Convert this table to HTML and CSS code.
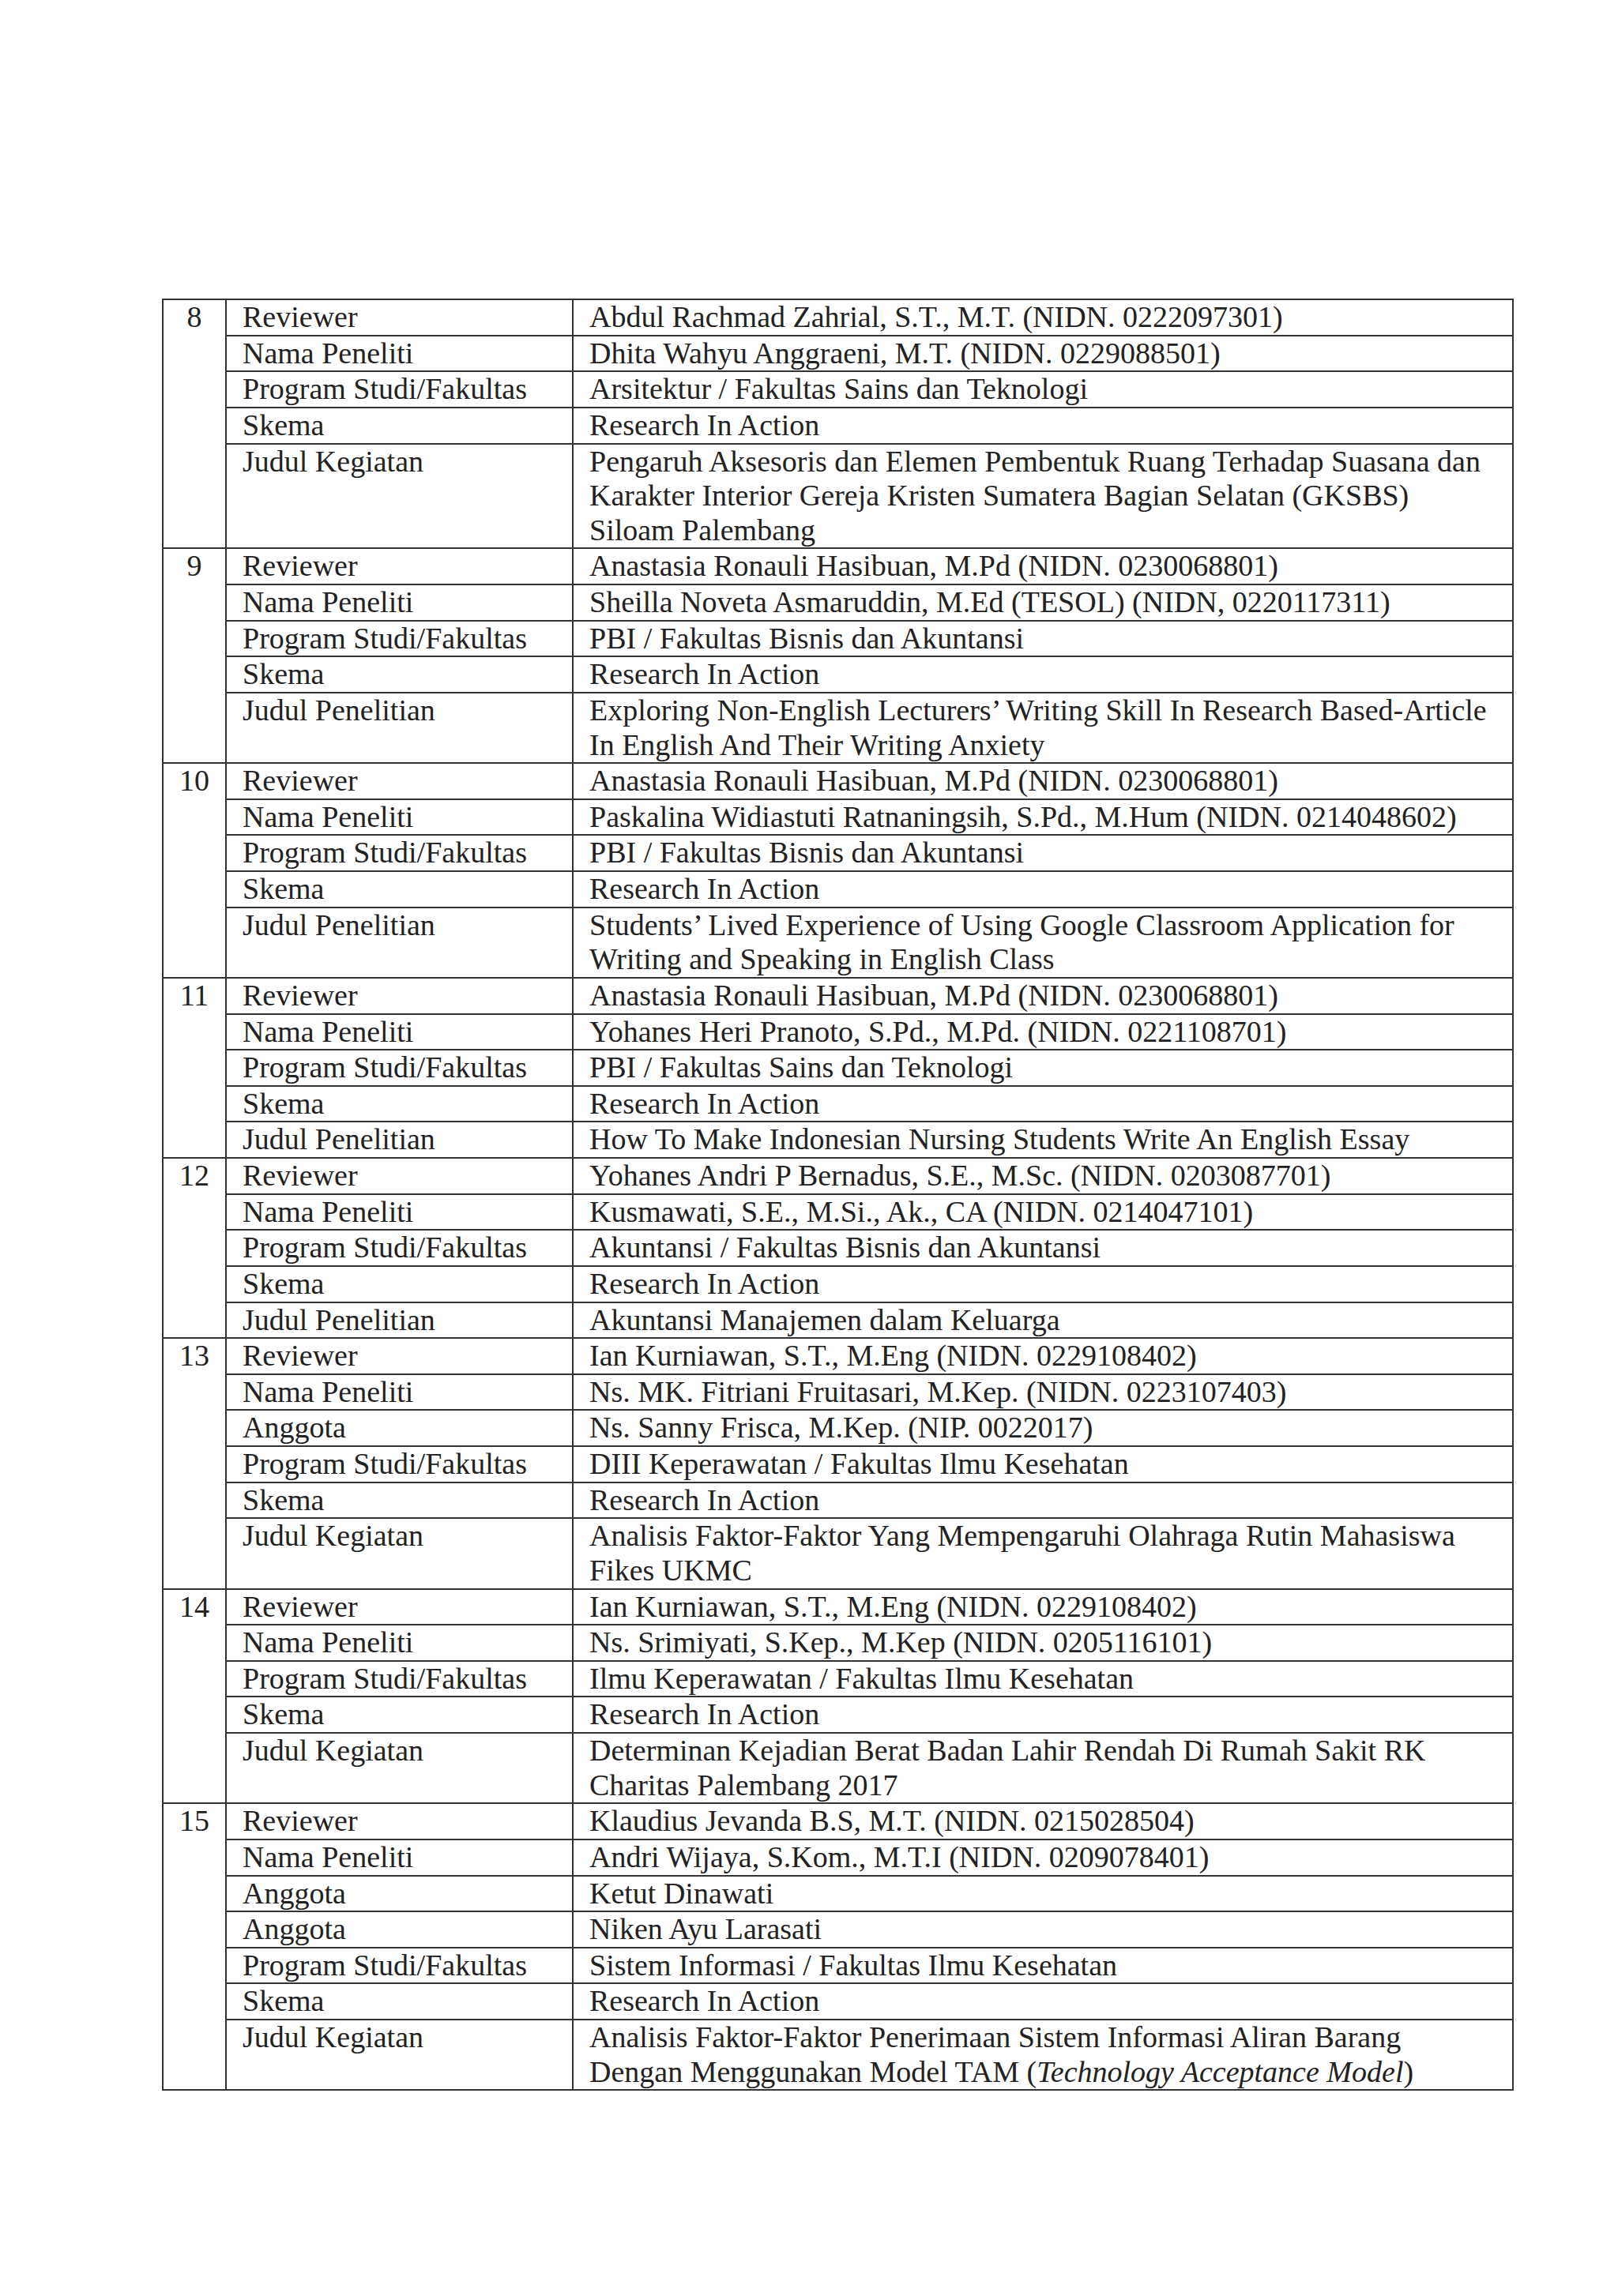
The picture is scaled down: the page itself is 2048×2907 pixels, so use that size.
FILE: index.html
```html
<!DOCTYPE html>
<html lang="id">
<head>
<meta charset="utf-8">
<title>Daftar Reviewer Penelitian</title>
<link rel="stylesheet" href="styles.css">
</head>
<body>
<div class="page">
<table class="tbl">
<colgroup><col class="c1"><col class="c2"><col class="c3"></colgroup>
<tbody>
<tr><td class="no" rowspan="5">8</td><td class="lbl">Reviewer</td><td class="val">Abdul Rachmad Zahrial, S.T., M.T. (NIDN. 0222097301)</td></tr>
<tr><td class="lbl">Nama Peneliti</td><td class="val">Dhita Wahyu Anggraeni, M.T. (NIDN. 0229088501)</td></tr>
<tr><td class="lbl">Program Studi/Fakultas</td><td class="val">Arsitektur / Fakultas Sains dan Teknologi</td></tr>
<tr><td class="lbl">Skema</td><td class="val">Research In Action</td></tr>
<tr><td class="lbl">Judul Kegiatan</td><td class="val">Pengaruh Aksesoris dan Elemen Pembentuk Ruang Terhadap Suasana dan<br>Karakter Interior Gereja Kristen Sumatera Bagian Selatan (GKSBS)<br>Siloam Palembang</td></tr>

<tr><td class="no" rowspan="5">9</td><td class="lbl">Reviewer</td><td class="val">Anastasia Ronauli Hasibuan, M.Pd (NIDN. 0230068801)</td></tr>
<tr><td class="lbl">Nama Peneliti</td><td class="val">Sheilla Noveta Asmaruddin, M.Ed (TESOL) (NIDN, 0220117311)</td></tr>
<tr><td class="lbl">Program Studi/Fakultas</td><td class="val">PBI / Fakultas Bisnis dan Akuntansi</td></tr>
<tr><td class="lbl">Skema</td><td class="val">Research In Action</td></tr>
<tr><td class="lbl">Judul Penelitian</td><td class="val">Exploring Non-English Lecturers’ Writing Skill In Research Based-Article<br>In English And Their Writing Anxiety</td></tr>

<tr><td class="no" rowspan="5">10</td><td class="lbl">Reviewer</td><td class="val">Anastasia Ronauli Hasibuan, M.Pd (NIDN. 0230068801)</td></tr>
<tr><td class="lbl">Nama Peneliti</td><td class="val">Paskalina Widiastuti Ratnaningsih, S.Pd., M.Hum (NIDN. 0214048602)</td></tr>
<tr><td class="lbl">Program Studi/Fakultas</td><td class="val">PBI / Fakultas Bisnis dan Akuntansi</td></tr>
<tr><td class="lbl">Skema</td><td class="val">Research In Action</td></tr>
<tr><td class="lbl">Judul Penelitian</td><td class="val">Students’ Lived Experience of Using Google Classroom Application for<br>Writing and Speaking in English Class</td></tr>

<tr><td class="no" rowspan="5">11</td><td class="lbl">Reviewer</td><td class="val">Anastasia Ronauli Hasibuan, M.Pd (NIDN. 0230068801)</td></tr>
<tr><td class="lbl">Nama Peneliti</td><td class="val">Yohanes Heri Pranoto, S.Pd., M.Pd. (NIDN. 0221108701)</td></tr>
<tr><td class="lbl">Program Studi/Fakultas</td><td class="val">PBI / Fakultas Sains dan Teknologi</td></tr>
<tr><td class="lbl">Skema</td><td class="val">Research In Action</td></tr>
<tr><td class="lbl">Judul Penelitian</td><td class="val">How To Make Indonesian Nursing Students Write An English Essay</td></tr>

<tr><td class="no" rowspan="5">12</td><td class="lbl">Reviewer</td><td class="val">Yohanes Andri P Bernadus, S.E., M.Sc. (NIDN. 0203087701)</td></tr>
<tr><td class="lbl">Nama Peneliti</td><td class="val">Kusmawati, S.E., M.Si., Ak., CA (NIDN. 0214047101)</td></tr>
<tr><td class="lbl">Program Studi/Fakultas</td><td class="val">Akuntansi / Fakultas Bisnis dan Akuntansi</td></tr>
<tr><td class="lbl">Skema</td><td class="val">Research In Action</td></tr>
<tr><td class="lbl">Judul Penelitian</td><td class="val">Akuntansi Manajemen dalam Keluarga</td></tr>

<tr><td class="no" rowspan="6">13</td><td class="lbl">Reviewer</td><td class="val">Ian Kurniawan, S.T., M.Eng (NIDN. 0229108402)</td></tr>
<tr><td class="lbl">Nama Peneliti</td><td class="val">Ns. MK. Fitriani Fruitasari, M.Kep. (NIDN. 0223107403)</td></tr>
<tr><td class="lbl">Anggota</td><td class="val">Ns. Sanny Frisca, M.Kep. (NIP. 0022017)</td></tr>
<tr><td class="lbl">Program Studi/Fakultas</td><td class="val">DIII Keperawatan / Fakultas Ilmu Kesehatan</td></tr>
<tr><td class="lbl">Skema</td><td class="val">Research In Action</td></tr>
<tr><td class="lbl">Judul Kegiatan</td><td class="val">Analisis Faktor-Faktor Yang Mempengaruhi Olahraga Rutin Mahasiswa<br>Fikes UKMC</td></tr>

<tr><td class="no" rowspan="5">14</td><td class="lbl">Reviewer</td><td class="val">Ian Kurniawan, S.T., M.Eng (NIDN. 0229108402)</td></tr>
<tr><td class="lbl">Nama Peneliti</td><td class="val">Ns. Srimiyati, S.Kep., M.Kep (NIDN. 0205116101)</td></tr>
<tr><td class="lbl">Program Studi/Fakultas</td><td class="val">Ilmu Keperawatan / Fakultas Ilmu Kesehatan</td></tr>
<tr><td class="lbl">Skema</td><td class="val">Research In Action</td></tr>
<tr><td class="lbl">Judul Kegiatan</td><td class="val">Determinan Kejadian Berat Badan Lahir Rendah Di Rumah Sakit RK<br>Charitas Palembang 2017</td></tr>

<tr><td class="no" rowspan="7">15</td><td class="lbl">Reviewer</td><td class="val">Klaudius Jevanda B.S, M.T. (NIDN. 0215028504)</td></tr>
<tr><td class="lbl">Nama Peneliti</td><td class="val">Andri Wijaya, S.Kom., M.T.I (NIDN. 0209078401)</td></tr>
<tr><td class="lbl">Anggota</td><td class="val">Ketut Dinawati</td></tr>
<tr><td class="lbl">Anggota</td><td class="val">Niken Ayu Larasati</td></tr>
<tr><td class="lbl">Program Studi/Fakultas</td><td class="val">Sistem Informasi / Fakultas Ilmu Kesehatan</td></tr>
<tr><td class="lbl">Skema</td><td class="val">Research In Action</td></tr>
<tr><td class="lbl">Judul Kegiatan</td><td class="val">Analisis Faktor-Faktor Penerimaan Sistem Informasi Aliran Barang<br>Dengan Menggunakan Model TAM (<em class="it">Technology Acceptance Model</em>)</td></tr>
</tbody>
</table>
</div>
</body>
</html>
```

FILE: styles.css
```css
html, body {
  margin: 0;
  padding: 0;
  background: #ffffff;
}

.page {
  width: 2048px;
  height: 2907px;
  box-sizing: border-box;
  padding-top: 378px;
  padding-left: 205px;
  font-family: "Liberation Serif", "Times New Roman", serif;
  font-size: 38px;
  line-height: 43.62px;
  color: #222222;
}

.tbl {
  border-collapse: collapse;
  table-layout: fixed;
  width: 1709px;
}

.c1 { width: 80px; }
.c2 { width: 439px; }
.c3 { width: 1190px; }

.tbl td {
  border: 2px solid #333333;
  padding: 0 20px;
  vertical-align: top;
  white-space: nowrap;
  text-align: left;
}

.tbl td.no {
  text-align: center;
  padding: 0;
}

.it {
  font-style: italic;
}
```
